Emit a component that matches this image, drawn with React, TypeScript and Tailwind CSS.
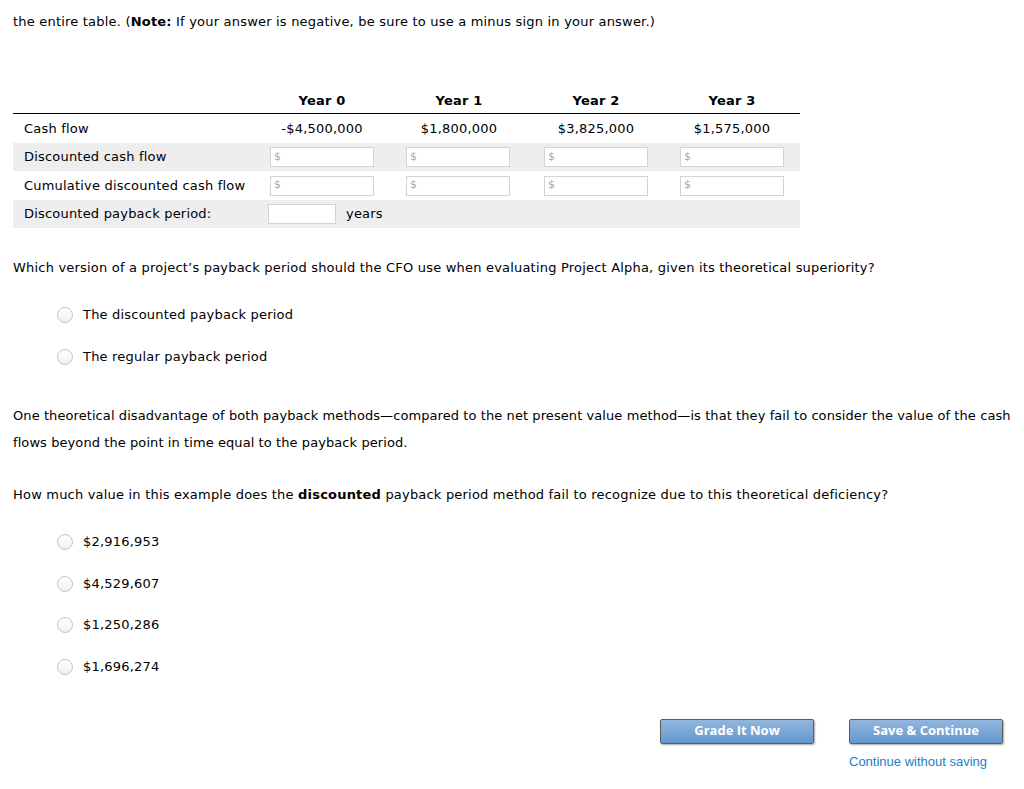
import React from 'react'

const years = ['Year 0', 'Year 1', 'Year 2', 'Year 3']
const cashFlows = ['-$4,500,000', '$1,800,000', '$3,825,000', '$1,575,000']

const firstChoices = ['The discounted payback period', 'The regular payback period']
const secondChoices = ['$2,916,953', '$4,529,607', '$1,250,286', '$1,696,274']

function DollarInput() {
  return (
    <div className="ml-4 flex h-5 w-[104px] items-center border border-[#d4d4d4] bg-white pl-[3px] text-[11px] tracking-normal text-[#a8a8a8]">
      $
    </div>
  )
}

function Radio({ label }: { label: string }) {
  return (
    <label className="flex items-center">
      <span className="ml-[44px] h-4 w-4 rounded-full border border-[#c4c4c4] bg-gradient-to-b from-white to-[#f0f0f0]" />
      <span className="ml-[10px]">{label}</span>
    </label>
  )
}

function ActionButton({ children }: { children: React.ReactNode }) {
  return (
    <button
      className="h-[25px] w-[154px] rounded-[2px] border border-[#5d5d5d] bg-gradient-to-b from-[#92b6de] to-[#6497cc] text-[13px] font-bold tracking-normal text-white shadow-[1px_1px_2px_rgba(0,0,0,0.35)]"
      style={{ fontFamily: '"Open Sans", sans-serif' }}
    >
      {children}
    </button>
  )
}

export default function App() {
  return (
    <div
      className="min-h-[789px] w-[1024px] overflow-hidden bg-white pl-[13px] text-[13px] tracking-[0.2px] text-black"
      style={{ fontFamily: '"DejaVu Sans", Verdana, sans-serif' }}
    >
      {/* Instructions */}
      <p className="pt-[13px] leading-[18px]">
        the entire table. (<b>Note:</b> If your answer is negative, be sure to use a minus sign in your answer.)
      </p>

      {/* Payback table */}
      <div className="mt-[58px] w-[787px]">
        <div className="grid h-[25px] grid-cols-[241px_136px_138px_136px_136px] items-center border-b border-black font-bold">
          <div />
          {years.map((y) => (
            <div key={y} className="text-center">{y}</div>
          ))}
        </div>
        <div className="grid h-[29px] grid-cols-[241px_136px_138px_136px_136px] items-center">
          <div className="pl-[11px]">Cash flow</div>
          {cashFlows.map((c) => (
            <div key={c} className="text-center">{c}</div>
          ))}
        </div>
        <div className="grid h-[28px] grid-cols-[241px_136px_138px_136px_136px] items-center bg-[#eeeeee]">
          <div className="pl-[11px]">Discounted cash flow</div>
          {years.map((y) => (
            <DollarInput key={y} />
          ))}
        </div>
        <div className="grid h-[29px] grid-cols-[241px_136px_138px_136px_136px] items-center">
          <div className="pl-[11px]">Cumulative discounted cash flow</div>
          {years.map((y) => (
            <DollarInput key={y} />
          ))}
        </div>
        <div className="flex h-[28px] items-center bg-[#eeeeee]">
          <div className="w-[241px] pl-[11px]">Discounted payback period:</div>
          <div className="ml-[14px] h-5 w-[68px] border border-[#d4d4d4] bg-white" />
          <span className="ml-[10px]">years</span>
        </div>
      </div>

      {/* Question 1 */}
      <p className="mt-[31px] leading-[18px]">
        Which version of a project’s payback period should the CFO use when evaluating Project Alpha, given its theoretical superiority?
      </p>
      <div className="mt-[29px] flex flex-col gap-[24px] leading-[18px]">
        {firstChoices.map((c) => (
          <Radio key={c} label={c} />
        ))}
      </div>

      {/* Explanation */}
      <p className="mt-[36px] whitespace-nowrap leading-[27px] tracking-[0.08px]">
        One theoretical disadvantage of both payback methods—compared to the net present value method—is that they fail to consider the value of the cash
        <br />
        flows beyond the point in time equal to the payback period.
      </p>

      {/* Question 2 */}
      <p className="mt-[30px] leading-[18px]">
        How much value in this example does the <b>discounted</b> payback period method fail to recognize due to this theoretical deficiency?
      </p>
      <div className="mt-[29px] flex flex-col gap-[23.5px] leading-[18px]">
        {secondChoices.map((c) => (
          <Radio key={c} label={c} />
        ))}
      </div>

      {/* Actions */}
      <div className="mt-[43px] flex justify-end gap-[35px] pr-[21px]">
        <ActionButton>Grade It Now</ActionButton>
        <div className="flex flex-col">
          <ActionButton>Save &amp; Continue</ActionButton>
          <a
            href="#"
            className="mt-[8px] text-[13px] tracking-normal text-[#1a80c8]"
            style={{ fontFamily: '"Liberation Sans", Arial, sans-serif' }}
          >
            Continue without saving
          </a>
        </div>
      </div>
    </div>
  )
}
